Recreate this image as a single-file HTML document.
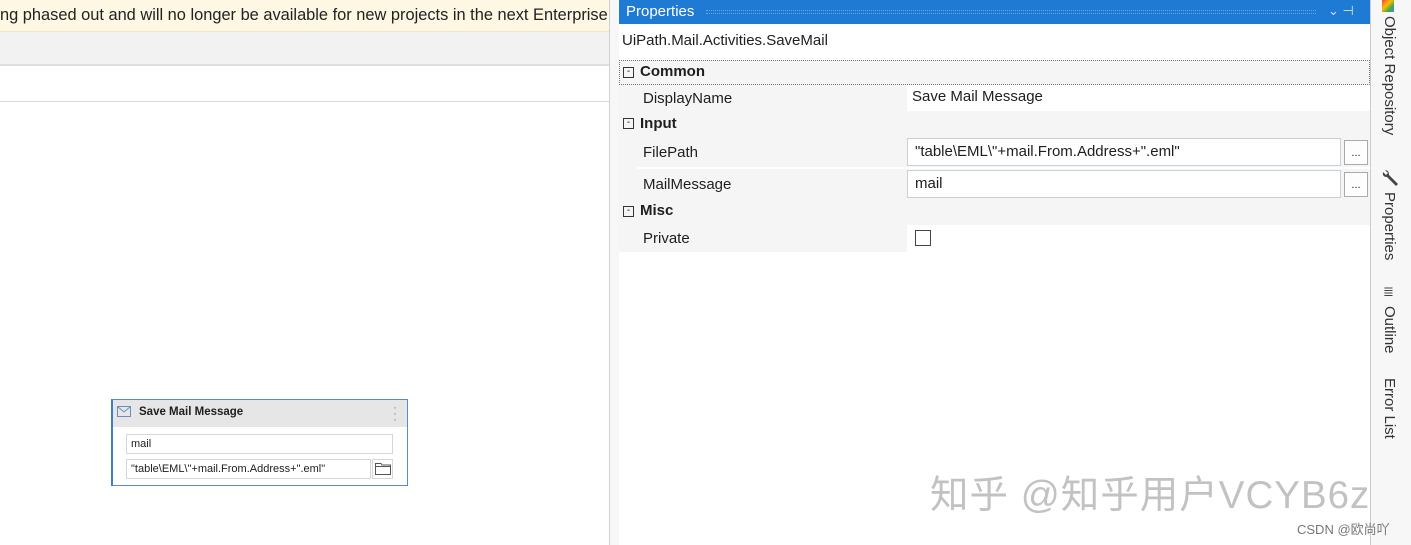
<!DOCTYPE html>
<html><head><meta charset="utf-8"><style>
*{margin:0;padding:0;box-sizing:border-box}
body{width:1411px;height:545px;overflow:hidden;background:#fff;font-family:"Liberation Sans","Noto Sans CJK SC",sans-serif;position:relative;color:#1e1e1e}
.a{position:absolute}
.lbl{font-size:15px}
</style></head><body>
<div class="a" style="left:0;top:0;width:610px;height:32px;background:#fdf7e3;border-bottom:1px solid #eee6c8"></div>
<div class="a" style="left:0;top:6px;white-space:nowrap;font-size:16.4px;color:#222">ng phased out and will no longer be available for new projects in the next Enterprise</div>
<div class="a" style="left:0;top:32px;width:610px;height:34px;background:#f2f2f2;border-bottom:2px solid #dedede"></div>
<div class="a" style="left:0;top:101px;width:610px;height:1px;background:#d8d8d8"></div>
<div class="a" style="left:609px;top:0;width:1px;height:545px;background:#d0d0d0"></div>
<div class="a" style="left:610px;top:0;width:9px;height:545px;background:#f7f7f7"></div>

<!-- activity card -->
<div class="a" style="left:111px;top:399px;width:297px;height:87px;border:1px solid #5a8cc4;border-left:2px solid #3c7fc6;background:#fff"></div>
<div class="a" style="left:113px;top:400px;width:294px;height:27px;background:#e6e6e6"></div>
<svg class="a" style="left:117px;top:406px" width="14" height="11" viewBox="0 0 14 11"><rect x="0.5" y="0.5" width="13" height="10" fill="none" stroke="#6a8fbf"/><path d="M0.5 0.5L7 6L13.5 0.5" fill="none" stroke="#6a8fbf"/></svg>
<div class="a" style="left:139px;top:406px;font-size:11.5px;font-weight:bold">Save Mail Message</div>
<div class="a" style="left:393px;top:404px;font-size:12px;color:#888;line-height:6px">·<br>·<br>·</div>
<div class="a" style="left:126px;top:434px;width:267px;height:20px;border:1px solid #d6d6d6;font-size:11px;padding:3px 4px">mail</div>
<div class="a" style="left:126px;top:459px;width:245px;height:20px;border:1px solid #d6d6d6;font-size:11px;padding:3px 4px;white-space:nowrap">"table\EML\"+mail.From.Address+".eml"</div>
<div class="a" style="left:372px;top:459px;width:21px;height:20px;border:1px solid #d6d6d6"></div>
<svg class="a" style="left:375px;top:462px" width="16" height="13" viewBox="0 0 16 13"><path d="M0.5 1.5H6L7 3H15.5V12.5H0.5Z M0.5 4.5H15.5" fill="none" stroke="#555"/></svg>

<!-- properties -->
<div class="a" style="left:619px;top:0;width:751px;height:24px;background:#1f7ad4"></div>
<div class="a" style="left:626px;top:3px;color:#fff;font-size:15px">Properties</div>
<div class="a" style="left:706px;top:10px;width:610px;height:4px;border-top:1px dotted #6aa6e6;border-bottom:1px dotted #6aa6e6"></div>
<div class="a" style="left:1328px;top:3px;color:#cfe3f7;font-size:13px">⌄ ⊣</div>
<div class="a" style="left:619px;top:24px;width:751px;height:521px;background:#fff"></div>
<div class="a lbl" style="left:622px;top:32px">UiPath.Mail.Activities.SaveMail</div>
<div class="a" style="left:619px;top:85px;width:18px;height:167px;background:#f5f5f5"></div>
<div class="a" style="left:637px;top:85px;width:733px;height:26px;background:#f5f5f5"></div>
<div class="a" style="left:637px;top:137px;width:733px;height:30px;background:#f5f5f5"></div>
<div class="a" style="left:637px;top:169px;width:733px;height:30px;background:#f5f5f5"></div>
<div class="a" style="left:637px;top:225px;width:733px;height:27px;background:#f5f5f5"></div>
<div class="a" style="left:907px;top:85px;width:463px;height:26px;background:#fff"></div>
<div class="a" style="left:907px;top:225px;width:463px;height:27px;background:#fff"></div>
<div class="a" style="left:619px;top:111px;width:751px;height:26px;background:#f5f5f5"></div>
<div class="a" style="left:619px;top:199px;width:751px;height:26px;background:#f5f5f5"></div>
<div class="a" style="left:619px;top:60px;width:751px;height:25px;background:#f5f5f5;border:1px dotted #777"></div>

<div class="a" style="left:623px;top:67px;width:11px;height:11px;border:1px solid #333;font-size:10px;line-height:8px;text-align:center">-</div>
<div class="a lbl" style="left:640px;top:63px;font-weight:bold">Common</div>
<div class="a lbl" style="left:643px;top:90px">DisplayName</div>
<div class="a lbl" style="left:912px;top:88px">Save Mail Message</div>
<div class="a" style="left:623px;top:118px;width:11px;height:11px;border:1px solid #333;font-size:10px;line-height:8px;text-align:center">-</div>
<div class="a lbl" style="left:640px;top:115px;font-weight:bold">Input</div>
<div class="a lbl" style="left:643px;top:144px">FilePath</div>
<div class="a" style="left:907px;top:138px;width:434px;height:28px;background:#fff;border:1px solid #c8d0d8"></div>
<div class="a lbl" style="left:915px;top:143px">"table\EML\"+mail.From.Address+".eml"</div>
<div class="a" style="left:1344px;top:140px;width:24px;height:25px;border:1px solid #aaa;background:#fdfdfd;font-size:11px;text-align:center;line-height:24px">...</div>
<div class="a lbl" style="left:643px;top:176px">MailMessage</div>
<div class="a" style="left:907px;top:170px;width:434px;height:28px;background:#fff;border:1px solid #c8d0d8"></div>
<div class="a lbl" style="left:915px;top:175px">mail</div>
<div class="a" style="left:1344px;top:172px;width:24px;height:25px;border:1px solid #aaa;background:#fdfdfd;font-size:11px;text-align:center;line-height:24px">...</div>
<div class="a" style="left:623px;top:206px;width:11px;height:11px;border:1px solid #333;font-size:10px;line-height:8px;text-align:center">-</div>
<div class="a lbl" style="left:640px;top:202px;font-weight:bold">Misc</div>
<div class="a lbl" style="left:643px;top:230px">Private</div>
<div class="a" style="left:915px;top:230px;width:16px;height:16px;border:1px solid #444;background:#fff"></div>

<!-- right tabs -->
<div class="a" style="left:1370px;top:0;width:1px;height:545px;background:#ccc"></div>
<div class="a" style="left:1371px;top:0;width:40px;height:545px;background:#f7f7f7"></div>
<div class="a" style="left:1382px;top:0;width:12px;height:12px;background:linear-gradient(135deg,#e44 0,#fb0 40%,#4a4 70%,#38f)"></div>
<div class="a" style="left:1381px;top:16px;writing-mode:vertical-rl;font-size:15px;color:#333;white-space:nowrap">Object Repository</div>
<svg class="a" style="left:1382px;top:168px" width="18" height="20" viewBox="0 0 18 20"><path d="M3 2L6 5L4 7L1 4Q0 9 5 9L14 18L16 16L7 7Q7 2 3 2Z" fill="#444"/></svg>
<div class="a" style="left:1381px;top:192px;writing-mode:vertical-rl;font-size:15px;color:#333">Properties</div>
<div class="a" style="left:1383px;top:284px;font-size:13px;color:#444">≣</div>
<div class="a" style="left:1381px;top:306px;writing-mode:vertical-rl;font-size:15px;color:#333">Outline</div>
<div class="a" style="left:1381px;top:378px;writing-mode:vertical-rl;font-size:15px;color:#333">Error List</div>

<!-- watermarks -->
<div class="a" style="left:930px;top:464px;font-size:38.5px;color:rgba(120,120,120,0.45);white-space:nowrap;letter-spacing:1px">知乎 @知乎用户VCYB6z</div>
<div class="a" style="left:1297px;top:519px;font-size:13px;color:#777;white-space:nowrap">CSDN @欧尚吖</div>
</body></html>
